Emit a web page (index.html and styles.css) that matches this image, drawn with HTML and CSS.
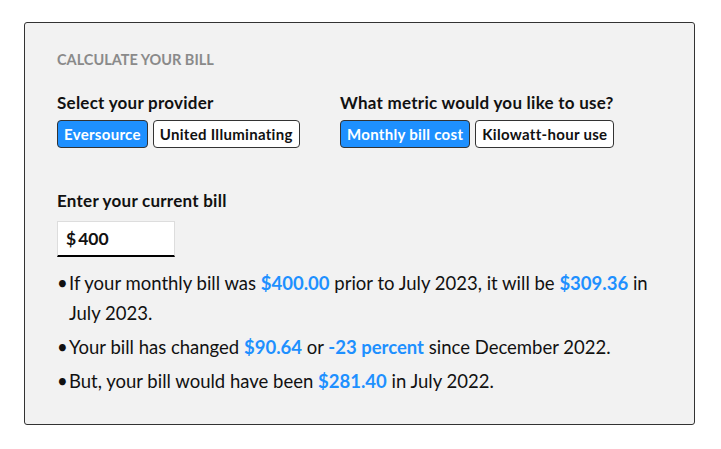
FILE: index.html
```html
<!DOCTYPE html>
<html>
<head>
<meta charset="utf-8">
<link rel="stylesheet" href="styles.css">
</head>
<body>
<div class="card">
  <div class="title">CALCULATE YOUR BILL</div>
  <div class="controls">
    <div class="group provider">
      <div class="label">Select your provider</div>
      <div class="buttons">
        <button class="btn active">Eversource</button>
        <button class="btn">United Illuminating</button>
      </div>
    </div>
    <div class="group">
      <div class="label">What metric would you like to use?</div>
      <div class="buttons">
        <button class="btn active">Monthly bill cost</button>
        <button class="btn">Kilowatt-hour use</button>
      </div>
    </div>
  </div>
  <div class="label bill-label">Enter your current bill</div>
  <div class="input"><span>$</span>400</div>
  <ul class="results">
    <li><span>If your monthly bill was</span> <b>$400.00</b> <span>prior to July 2023, it will be</span> <b>$309.36</b> <span>in</span> <span class="nowrap">July 2023.</span></li>
    <li>Your bill has changed <b>$90.64</b> or <b>-23 percent</b> since December 2022.</li>
    <li>But, your bill would have been <b>$281.40</b> in July 2022.</li>
  </ul>
</div>
</body>
</html>
```
FILE: styles.css
```css
html, body {
  margin: 0;
  padding: 0;
  background: #ffffff;
}
body {
  font-family: Lato, "Liberation Sans", sans-serif;
  color: #111;
  padding: 22px 26px 0 24px;
}
.card {
  background: #f2f2f2;
  border: 1px solid #333;
  border-radius: 3px;
  padding: 28px 32px 28px 32px;
}
.title {
  font-size: 14.5px;
  font-weight: 700;
  color: #8a8a8a;
  line-height: 18px;
}
.controls {
  display: flex;
  margin-top: 24px;
}
.group.provider {
  width: 283px;
}
.label {
  font-size: 17px;
  font-weight: 700;
  line-height: 20px;
  letter-spacing: 0.25px;
  color: #111;
}
.buttons {
  display: flex;
  gap: 5px;
  margin-top: 7px;
}
.btn {
  font-family: inherit;
  font-size: 15px;
  font-weight: 700;
  letter-spacing: 0.3px;
  color: #111;
  background: #fff;
  border: 1px solid #333;
  border-radius: 4px;
  padding: 0 6px;
  height: 28px;
  line-height: 26px;
}
.btn.active {
  background: #1e90ff;
  color: #fff;
}
.bill-label {
  margin-top: 43px;
}
.input {
  margin-top: 10px;
  width: 108px;
  height: 33px;
  background: #fff;
  border: 1px solid #ddd;
  border-bottom: 2px solid #000;
  font-size: 17.5px;
  font-weight: 700;
  line-height: 33px;
  padding-left: 8px;
}
.input span {
  margin-right: 2px;
}
.results {
  list-style: none;
  margin: 11px 0 0 0;
  padding: 0;
  font-size: 18.5px;
  line-height: 30px;
}
.results li {
  padding-left: 12px;
  position: relative;
  margin-bottom: 4px;
}
.results li:last-child {
  margin-bottom: 0;
}
.results li::before {
  content: "•";
  position: absolute;
  left: 0;
}
.results b {
  color: #1e90ff;
}
.nowrap {
  white-space: nowrap;
}
```
